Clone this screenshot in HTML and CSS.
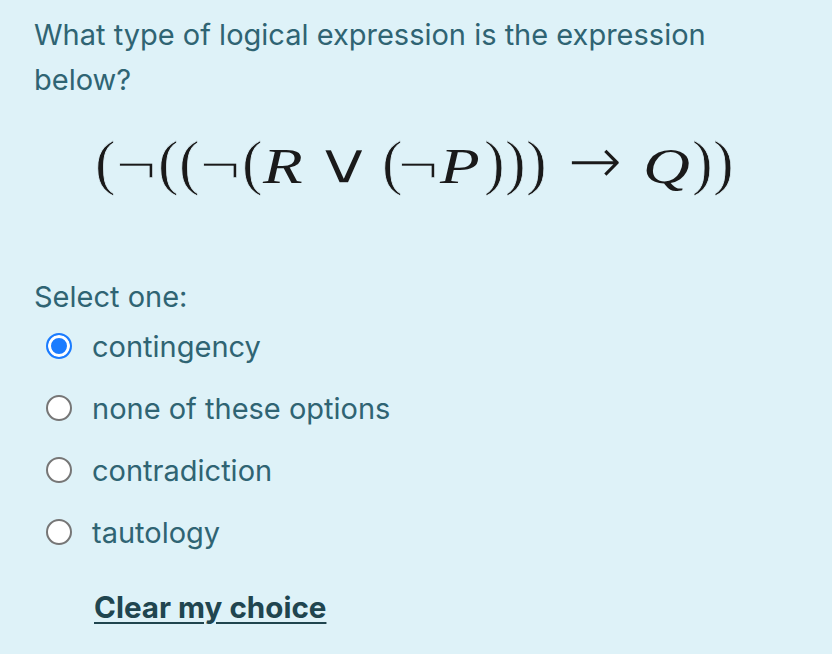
FILE: index.html
```html
<!DOCTYPE html>
<html lang="en">
<head>
<meta charset="utf-8">
<title>Question</title>
<link rel="stylesheet" href="styles.css">
</head>
<body>
<div class="que">
  <div class="qtext">What type of logical expression is the expression below?</div>
  <div class="math" aria-label="(¬((¬(R ∨ (¬P))) → Q))">
    <span class="p">(</span><span class="neg"><i>¬</i></span><span class="p">(</span><span class="p">(</span><span class="neg"><i>¬</i></span><span class="p">(</span><span class="v vr"><i>R</i></span><span class="bin"><i>∨</i></span><span class="p tight">(</span><span class="neg"><i>¬</i></span><span class="v vp"><i>P</i></span><span class="p">)</span><span class="p">)</span><span class="p">)</span><span class="rel">→</span><span class="v vq"><i>Q</i></span><span class="p">)</span><span class="p">)</span>
  </div>
  <div class="prompt">Select one:</div>
  <div class="answer">
    <label class="opt"><span class="radio checked"></span><span class="lbl">contingency</span></label>
    <label class="opt"><span class="radio"></span><span class="lbl">none of these options</span></label>
    <label class="opt"><span class="radio"></span><span class="lbl">contradiction</span></label>
    <label class="opt"><span class="radio"></span><span class="lbl">tautology</span></label>
  </div>
  <div class="clear-wrap"><a class="clear" href="#">Clear my choice</a></div>
</div>
</body>
</html>
```
FILE: styles.css
```css
html, body {
  margin: 0;
  padding: 0;
  background: #def2f8;
}
body {
  width: 832px;
  height: 654px;
  overflow: hidden;
}
.que {
  padding: 12px 40px 0 34px;
  color: #2f6473;
  font-family: Inter, "Open Sans", "Liberation Sans", sans-serif;
  font-size: 29px;
  line-height: 45px;
}
.qtext {
  max-width: 700px;
}

/* formula */
.math {
  display: flex;
  align-items: baseline;
  margin: 19px 0 0 61px;
  height: 80px;
  color: #1a1a1a;
  font-family: "Liberation Serif", "DejaVu Serif", serif;
  font-size: 50px;
  line-height: 80px;
  white-space: nowrap;
}
.math > span {
  flex: none;
  display: inline-block;
}
.math i {
  display: inline-block;
  transform-origin: left center;
}
.math .p {
  width: 21px;
  font-size: 62px;
  -webkit-text-stroke: 0.8px #def2f8;
}
.math .p.tight {
  width: 16px;
  letter-spacing: -5px;
}
.math .neg {
  width: 42px;
  font-size: 54px;
}
.math .neg i {
  font-style: normal;
  transform: scaleX(1.32);
  -webkit-text-stroke: 0.6px #def2f8;
}
.math .v i {
  font-style: italic;
  transform: scaleX(1.3);
}
.math .vr { width: 50px; }
.math .vp { width: 44px; }
.math .vq { width: 49px; }
.math .bin {
  width: 69px;
  font-family: "DejaVu Sans ExtraLight", "DejaVu Sans", sans-serif;
  font-size: 58px;
}
.math .bin i {
  font-style: normal;
  transform: scaleX(1.45);
  -webkit-text-stroke: 1.6px #def2f8;
}
.math .rel {
  width: 75px;
  margin-left: 21px;
  font-family: "DejaVu Sans ExtraLight", "DejaVu Sans", sans-serif;
  font-weight: 200;
  font-size: 64px;
}

.prompt {
  margin-top: 73px;
}
.answer {
  margin-top: -4px;
}
.opt {
  display: flex;
  align-items: center;
  height: 62px;
}
.radio {
  box-sizing: border-box;
  width: 26px;
  height: 26px;
  border-radius: 50%;
  border: 2px solid #767676;
  background: #ffffff;
  margin: 0 20px 0 12px;
  flex: none;
}
.radio.checked {
  border: 2.5px solid #1b7cff;
  background: #1b7cff;
  box-shadow: inset 0 0 0 3px #ffffff;
}
.clear-wrap {
  margin: 22px 0 0 60px;
}
.clear {
  color: #20454f;
  font-size: 29.6px;
  font-weight: 700;
  text-decoration: underline;
  text-decoration-thickness: 2px;
  text-underline-offset: 4px;
}
```
